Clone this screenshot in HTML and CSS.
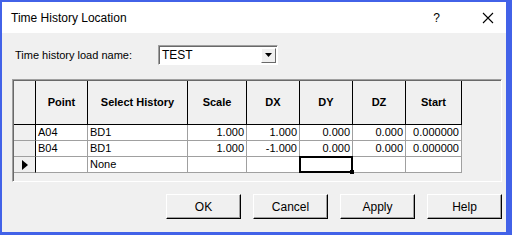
FILE: index.html
```html
<!DOCTYPE html>
<html lang="en">
<head>
  <meta charset="UTF-8">
  <title>Time History Location</title>
  <link rel="stylesheet" href="styles.css">
</head>
<body>
  <div class="dialog">
    <div class="titlebar">
      <span class="title">Time History Location</span>
      <span class="help-btn">?</span>
      <svg class="close-btn" width="12" height="12" viewBox="0 0 12 12">
        <path d="M1 1 L11 11 M11 1 L1 11" stroke="#000" stroke-width="1.1" fill="none"/>
      </svg>
    </div>

    <div class="content">
      <div class="load-row">
        <label>Time history load name:</label>
        <div class="combo">
          <span class="combo-text">TEST</span>
          <span class="combo-btn">
            <svg width="7" height="4" viewBox="0 0 7 4"><path d="M0 0 H7 L3.5 4 Z" fill="#000"/></svg>
          </span>
        </div>
      </div>

      <div class="grid-box">
        <div class="grid">
          <div class="hd corner"></div>
          <div class="hd">Point</div>
          <div class="hd">Select History</div>
          <div class="hd">Scale</div>
          <div class="hd">DX</div>
          <div class="hd">DY</div>
          <div class="hd">DZ</div>
          <div class="hd">Start</div>

          <div class="rh"></div>
          <div class="c">A04</div>
          <div class="c">BD1</div>
          <div class="c num">1.000</div>
          <div class="c num">1.000</div>
          <div class="c num">0.000</div>
          <div class="c num">0.000</div>
          <div class="c num">0.000000</div>

          <div class="rh"></div>
          <div class="c">B04</div>
          <div class="c">BD1</div>
          <div class="c num">1.000</div>
          <div class="c num">-1.000</div>
          <div class="c num">0.000</div>
          <div class="c num">0.000</div>
          <div class="c num">0.000000</div>

          <div class="rh current"><svg width="6" height="10" viewBox="0 0 6 10"><path d="M0 0 L6 5 L0 10 Z" fill="#000"/></svg></div>
          <div class="c"></div>
          <div class="c">None</div>
          <div class="c"></div>
          <div class="c"></div>
          <div class="c selected"></div>
          <div class="c"></div>
          <div class="c"></div>
        </div>
      </div>

      <div class="buttons">
        <button>OK</button>
        <button>Cancel</button>
        <button>Apply</button>
        <button>Help</button>
      </div>
    </div>
  </div>
</body>
</html>
```

FILE: styles.css
```css
html, body {
  margin: 0;
  padding: 0;
}

body {
  width: 512px;
  height: 235px;
  background: #4262e8;
  padding: 2px 6px 3px 2px;
  box-sizing: border-box;
  font-family: 'Liberation Sans', Arial, sans-serif;
  font-size: 11px;
  color: #000;
}

.dialog {
  height: 100%;
  background: #f0f0f0;
  display: flex;
  flex-direction: column;
}

.titlebar {
  height: 31px;
  background: #fff;
  display: flex;
  align-items: center;
  padding: 0 12px 0 9px;
}

.title {
  flex: 1;
  font-size: 12px;
}

.help-btn {
  font-size: 12px;
  margin-right: 42px;
}

.content {
  padding: 12px 4px 0 10px;
}

.load-row {
  display: flex;
  align-items: center;
  height: 20px;
}

.load-row label {
  width: 143px;
  padding-left: 3px;
}

.combo {
  width: 120px;
  height: 20px;
  box-sizing: border-box;
  background: #fff;
  border: 1px solid;
  border-color: #a0a0a0 #fff #fff #a0a0a0;
  box-shadow: inset 1px 1px 0 #696969;
  display: flex;
  align-items: center;
}

.combo-text {
  flex: 1;
  padding-left: 3px;
  font-size: 12px;
}

.combo-btn {
  width: 15px;
  height: 15px;
  margin-right: 1px;
  box-sizing: border-box;
  background: #f0f0f0;
  border: 1px solid;
  border-color: #fff #696969 #696969 #fff;
  display: flex;
  align-items: center;
  justify-content: center;
}

.grid-box {
  margin-top: 14px;
  height: 103px;
  box-sizing: border-box;
  border: 1px solid;
  border-color: #a0a0a0 #fff #fff #a0a0a0;
  box-shadow: inset 1px 1px 0 #696969;
  padding: 1px 0 0 1px;
}

.grid {
  display: grid;
  grid-template-columns: 22px 52px 100px 59px 53px 53px 53px 56px;
  grid-template-rows: 44px 16px 16px 16px;
  width: max-content;
}

.grid > div {
  box-sizing: border-box;
  border-right: 1px solid #a0a0a0;
  border-bottom: 1px solid #a0a0a0;
  white-space: nowrap;
}

.grid > .hd {
  background: #f0f0f0;
  border-color: #000;
  font-weight: bold;
  display: flex;
  align-items: center;
  justify-content: center;
  padding-bottom: 2px;
}

.grid > .rh {
  background: #f0f0f0;
  border-right-color: #000;
  display: flex;
  align-items: center;
  padding-left: 8px;
}

.grid > .c {
  background: #fff;
  padding: 1px 2px 0 2px;
  line-height: 13px;
}

.grid > .num {
  text-align: right;
}

.grid > .selected {
  position: relative;
}

.selected::after {
  content: "";
  position: absolute;
  left: -1px;
  top: -1px;
  right: -1px;
  bottom: -1px;
  border: 2px solid #000;
}

.selected::before {
  content: "";
  position: absolute;
  right: -2px;
  bottom: -2px;
  width: 4px;
  height: 4px;
  background: #000;
  z-index: 1;
}

.buttons {
  display: flex;
  justify-content: flex-end;
  gap: 12px;
  margin-top: 12px;
}

.buttons button {
  width: 75px;
  height: 25px;
  font-family: 'Liberation Sans', Arial, sans-serif;
  font-size: 12px;
  background: #f0f0f0;
  border: 1px solid;
  border-color: #fff #000 #000 #fff;
  box-shadow: inset -1px -1px 0 #a0a0a0;
  padding: 0;
  color: #000;
}
```
